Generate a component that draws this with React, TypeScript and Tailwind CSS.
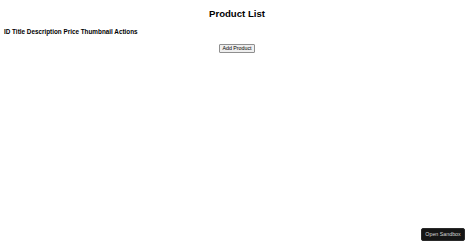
export default function App() {
  return (
    <div className="relative min-h-[248px] bg-white text-black font-['Liberation_Sans',Arial,sans-serif]">
      <div className="px-[4px] pt-[8px]">
        <h2 className="text-center text-[9.6px] font-bold leading-[12px]">Product List</h2>
        <table className="mt-[8px] border-collapse">
          <thead>
            <tr>
              <th className="p-0 text-[6.35px] font-bold leading-[8px] text-left">
                ID Title Description Price Thumbnail Actions
              </th>
            </tr>
          </thead>
        </table>
        <div className="mt-[8px] flex justify-center">
          <button className="h-[9px] border border-[#8f8f8f] bg-[#efefef] rounded-[1px] px-[2px] text-[5.3px] leading-[7px] text-black">
            Add Product
          </button>
        </div>
      </div>
      <button className="absolute right-[9px] bottom-[7px] h-[13px] w-[44px] rounded-[2px] bg-[#151515] border border-[#2a2a2a] text-[5.3px] text-[#d8d8d8]">
        Open Sandbox
      </button>
    </div>
  );
}
